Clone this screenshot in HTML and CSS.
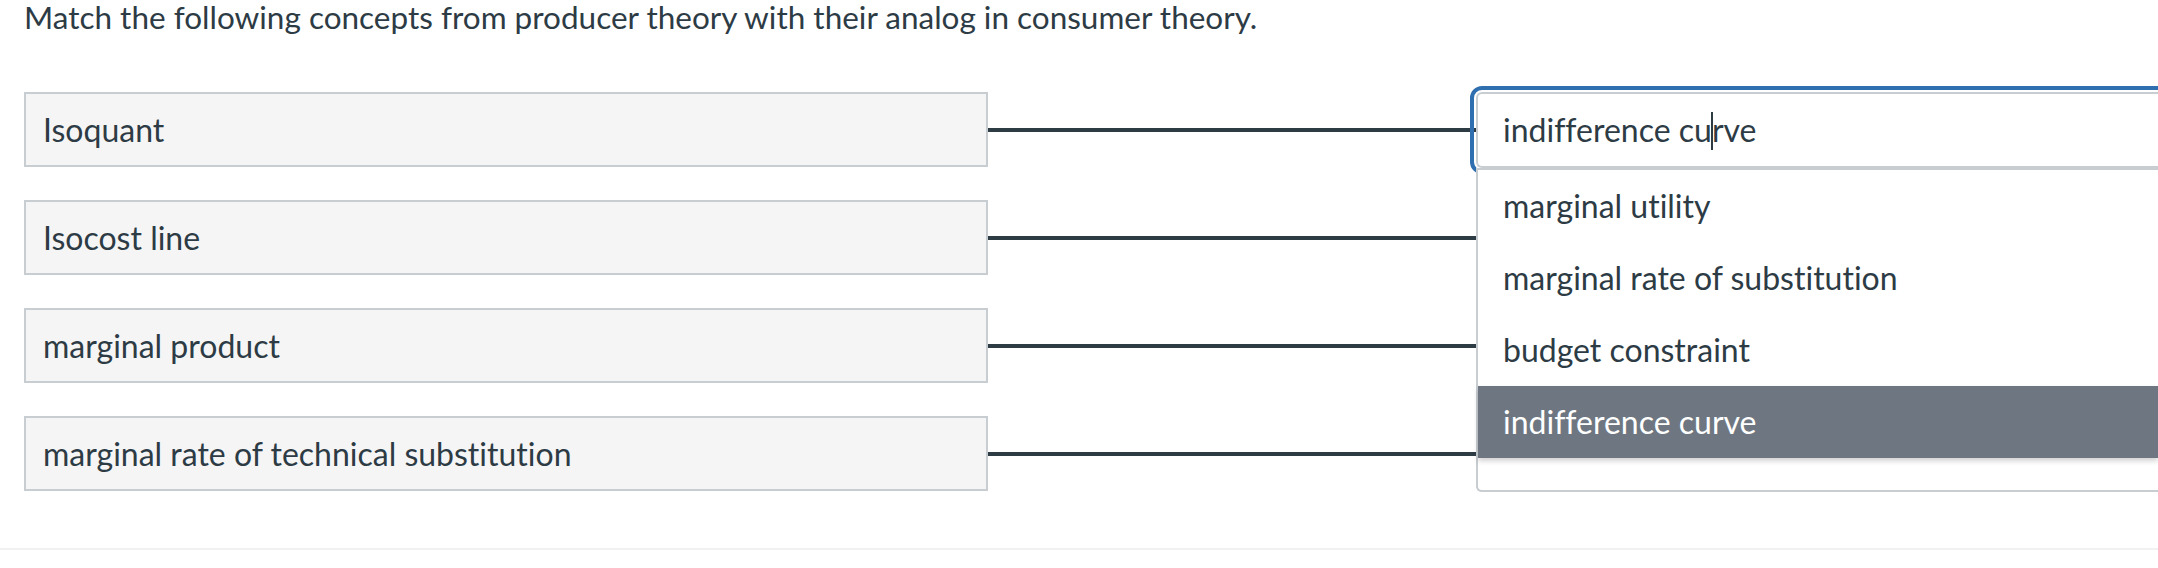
FILE: index.html
```html
<!DOCTYPE html>
<html lang="en">
<head>
<meta charset="utf-8">
<title>Matching question</title>
<link rel="stylesheet" href="styles.css">
</head>
<body>
<div class="question">
  <div class="question-text">Match the following concepts from producer theory with their analog in consumer theory.</div>
  <div class="match-list">
    <div class="match-row">
      <div class="term">Isoquant</div>
      <div class="connector"></div>
      <div class="select-wrap">
        <div class="select focused">indifference cu<span class="caret"></span>rve</div>
        <div class="dropdown">
          <div class="option">marginal utility</div>
          <div class="option">marginal rate of substitution</div>
          <div class="option">budget constraint</div>
          <div class="option selected">indifference curve</div>
        </div>
      </div>
    </div>
    <div class="match-row">
      <div class="term">Isocost line</div>
      <div class="connector"></div>
      <div class="select-wrap"><div class="select"></div></div>
    </div>
    <div class="match-row">
      <div class="term">marginal product</div>
      <div class="connector"></div>
      <div class="select-wrap"><div class="select"></div></div>
    </div>
    <div class="match-row">
      <div class="term">marginal rate of technical substitution</div>
      <div class="connector"></div>
      <div class="select-wrap"><div class="select"></div></div>
    </div>
  </div>
  <div class="question-footer"></div>
</div>
</body>
</html>
```

FILE: styles.css
```css
html, body {
  margin: 0;
  padding: 0;
  background: #ffffff;
  overflow: hidden;
}
body {
  font-family: "Lato", "Open Sans", "Liberation Sans", sans-serif;
  font-variant-ligatures: no-common-ligatures;
  color: #2d3b45;
  width: 2158px;
  height: 568px;
}
.question {
  padding: 1px 0 0 24px;
}
.question-text {
  font-size: 31.5px;
  line-height: 32px;
  height: 32px;
  margin-bottom: 59px;
  white-space: nowrap;
}
.match-list {
  display: flex;
  flex-direction: column;
  gap: 33px;
}
.match-row {
  display: flex;
  align-items: center;
  height: 75px;
}
.term {
  box-sizing: border-box;
  width: 964px;
  height: 75px;
  flex: none;
  background: #f5f5f5;
  border: 2px solid #c7cdd1;
  padding: 0 0 1px 17px;
  font-size: 32px;
  display: flex;
  align-items: center;
}
.connector {
  width: 488px;
  height: 4px;
  flex: none;
  background: #2d3b45;
}
.select-wrap {
  position: relative;
  flex: 1;
  min-width: 0;
  height: 75px;
}
.select {
  box-sizing: border-box;
  height: 76px;
  border: 2px solid #c7cdd1;
  border-right: 0;
  border-radius: 6px 0 0 6px;
  background: #fff;
  padding: 0 0 0 25px;
  font-size: 32px;
  line-height: 72px;
  white-space: nowrap;
}
.select.focused {
  outline: 4px solid #2f6fb0;
  outline-offset: 2px;
}
.caret {
  display: inline-block;
  width: 2px;
  height: 38px;
  background: #2d3b45;
  vertical-align: -8px;
  margin: 0 -1px;
}
.dropdown {
  position: absolute;
  top: 76px;
  left: 0;
  right: 0;
  z-index: 5;
  background: #fff;
  border: 2px solid #c7cdd1;
  border-right: 0;
  border-radius: 0 0 0 6px;
  padding-bottom: 32px;
}
.option {
  box-sizing: border-box;
  height: 72px;
  padding: 1px 0 0 25px;
  line-height: 69px;
  font-size: 32px;
  color: #2d3b45;
  white-space: nowrap;
}
.option.selected {
  background: #6e7781;
  color: #ffffff;
  box-shadow: 0 3px 5px rgba(0, 0, 0, 0.18);
}
.question-footer {
  margin: 57px 0 0 -24px;
  border-top: 2px solid #f1f1f1;
}
```
